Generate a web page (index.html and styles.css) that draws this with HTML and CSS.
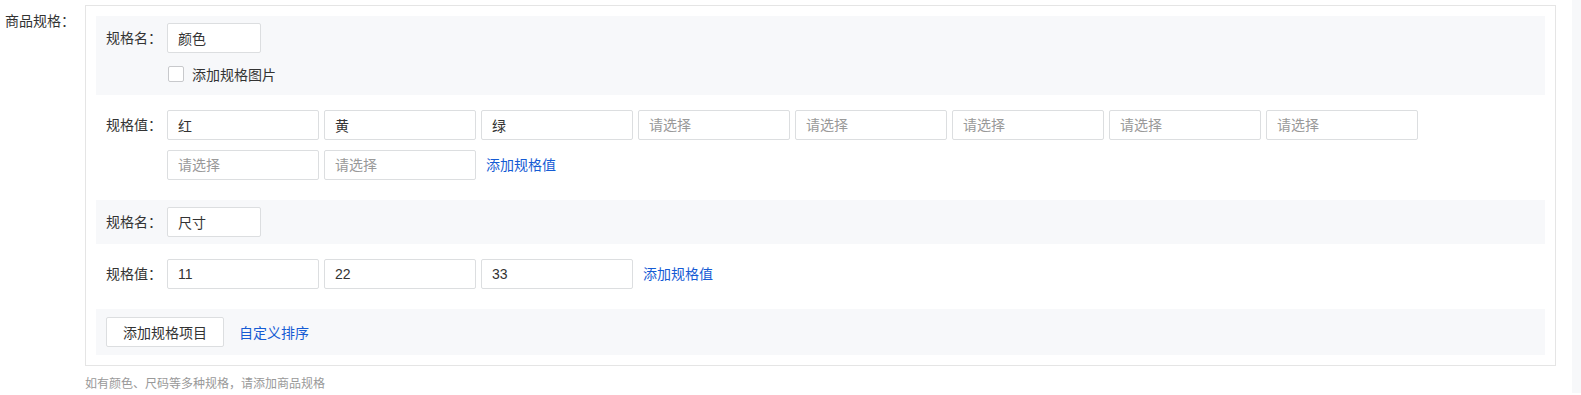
FILE: index.html
```html
<!DOCTYPE html>
<html lang="zh-CN">
<head>
    <meta charset="UTF-8">
    <meta name="viewport" content="width=device-width, initial-scale=1.0">
    <title>商品规格</title>
    <link rel="stylesheet" href="styles.css">
</head>
<body>
    <div class="page">
        <div class="main">
            <div class="field">
                <div class="field-label">商品规格：</div>
                <div class="field-body">
                    <div class="spec-box">
                        <!-- 规格 1 -->
                        <div class="spec-head">
                            <div class="row">
                                <span class="row-label">规格名：</span>
                                <input class="name-input" type="text" value="颜色">
                            </div>
                            <label class="pic-row">
                                <span class="checkbox"></span>
                                添加规格图片
                            </label>
                        </div>
                        <div class="spec-values">
                            <div class="row top">
                                <span class="row-label">规格值：</span>
                                <div class="value-list">
                                    <input class="value-input" type="text" value="红">
                                    <input class="value-input" type="text" value="黄">
                                    <input class="value-input" type="text" value="绿">
                                    <input class="value-input" type="text" placeholder="请选择">
                                    <input class="value-input" type="text" placeholder="请选择">
                                    <input class="value-input" type="text" placeholder="请选择">
                                    <input class="value-input" type="text" placeholder="请选择">
                                    <input class="value-input" type="text" placeholder="请选择">
                                    <input class="value-input" type="text" placeholder="请选择">
                                    <input class="value-input" type="text" placeholder="请选择">
                                    <a class="link add-value" href="#">添加规格值</a>
                                </div>
                            </div>
                        </div>

                        <!-- 规格 2 -->
                        <div class="spec-head">
                            <div class="row">
                                <span class="row-label">规格名：</span>
                                <input class="name-input" type="text" value="尺寸">
                            </div>
                        </div>
                        <div class="spec-values">
                            <div class="row top">
                                <span class="row-label">规格值：</span>
                                <div class="value-list">
                                    <input class="value-input" type="text" value="11">
                                    <input class="value-input" type="text" value="22">
                                    <input class="value-input" type="text" value="33">
                                    <a class="link add-value" href="#">添加规格值</a>
                                </div>
                            </div>
                        </div>

                        <div class="spec-foot">
                            <button class="btn" type="button">添加规格项目</button>
                            <a class="link sort-link" href="#">自定义排序</a>
                        </div>
                    </div>
                    <p class="hint">如有颜色、尺码等多种规格，请添加商品规格</p>
                </div>
            </div>
        </div>
        <div class="scroll-track"></div>
    </div>
</body>
</html>
```

FILE: styles.css
```css
html, body {
    margin: 0;
    height: 100%;
    overflow: hidden;
}
body {
    font-family: "Liberation Sans", "Noto Sans CJK SC", sans-serif;
    font-size: 14px;
    color: #333;
    background: #fff;
}
.page {
    display: flex;
    height: 100%;
}
.main {
    flex: 1;
    padding: 5px 16px 0 5px;
}
.scroll-track {
    width: 9px;
    background: #f7f8fa;
    margin-bottom: 2px;
}
.field {
    display: flex;
    align-items: flex-start;
}
.field-label {
    width: 80px;
    flex-shrink: 0;
    line-height: 30px;
    padding-top: 1px;
}
.field-body {
    flex: 1;
}
.spec-box {
    border: 1px solid #e5e5e5;
    padding: 10px;
}
.spec-head {
    background: #f7f8fa;
    padding: 7px 10px;
}
.row {
    display: flex;
    align-items: center;
}
.row.top {
    align-items: flex-start;
}
.row-label {
    width: 61px;
    flex-shrink: 0;
    line-height: 30px;
}
input {
    font-family: inherit;
    font-size: 14px;
    color: #333;
    box-sizing: border-box;
    height: 30px;
    padding: 0 10px;
    border: 1px solid #dcdee0;
    border-radius: 2px;
    background: #fff;
    outline: none;
}
input::placeholder {
    color: #999;
}
.name-input {
    width: 94px;
}
.pic-row {
    display: flex;
    align-items: center;
    height: 22px;
    margin: 10px 0 3px 62px;
}
.checkbox {
    width: 16px;
    height: 16px;
    box-sizing: border-box;
    border: 1px solid #c8c9cc;
    border-radius: 2px;
    background: #fff;
    margin-right: 8px;
}
.spec-values {
    padding: 15px 10px 10px;
}
.value-list {
    flex: 1;
    display: flex;
    flex-wrap: wrap;
    align-items: flex-start;
}
.value-input {
    width: 152px;
    margin: 0 5px 10px 0;
}
.link {
    color: #155bd4;
    text-decoration: none;
}
.add-value {
    line-height: 30px;
    margin-left: 5px;
}
.spec-foot {
    display: flex;
    align-items: center;
    background: #f7f8fa;
    padding: 8px 10px;
}
.btn {
    font-family: inherit;
    font-size: 14px;
    color: #333;
    width: 118px;
    height: 30px;
    border: 1px solid #dcdee0;
    border-radius: 2px;
    background: #fff;
    cursor: pointer;
}
.sort-link {
    margin-left: 15px;
}
.hint {
    margin: 10px 0 0;
    font-size: 12px;
    line-height: 16px;
    color: #999;
}
```
